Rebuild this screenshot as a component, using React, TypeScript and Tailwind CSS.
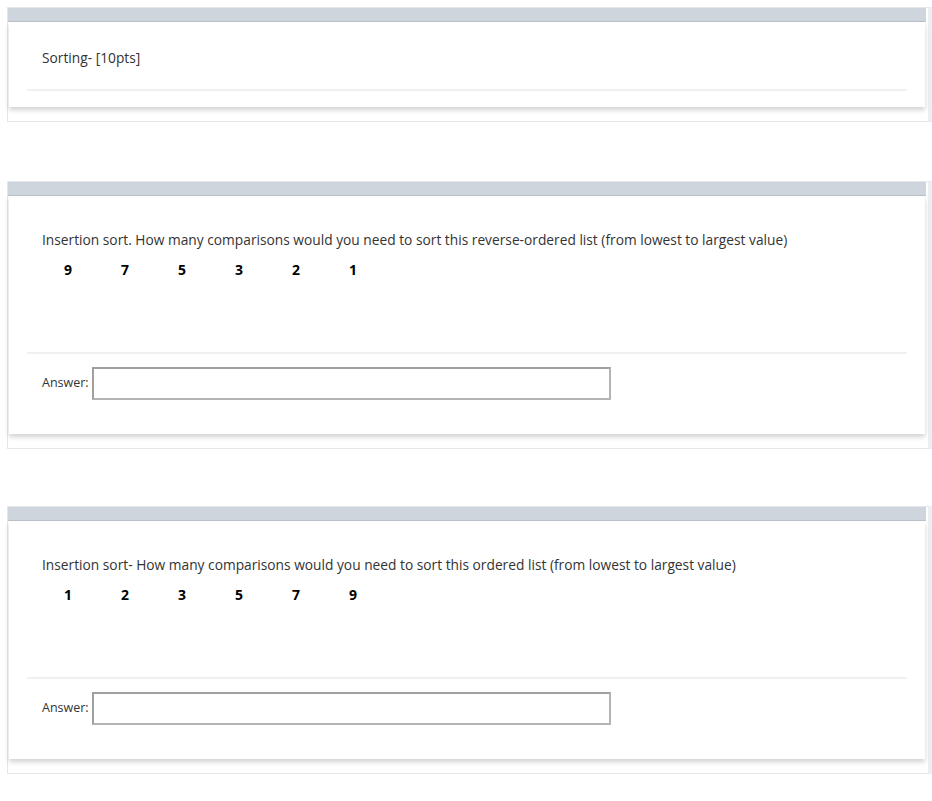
import React from "react";

const font = { fontFamily: '"Open Sans", "Noto Sans", sans-serif' };

function Frame({ children }: { children: React.ReactNode }) {
  return (
    <div className="ml-[7px] w-[925px] border-t border-l border-b border-[#e4e7eb] border-r-4 border-r-[#eceef1] bg-white">
      <div className="h-[14px] mr-[2px] bg-[#ced5dc] border-b border-[#bcc3ca]" />
      <div className="ml-px mr-[3px] bg-white shadow-[0_3px_5px_rgba(0,0,0,0.18)]">{children}</div>
      <div className="h-[14px]" />
    </div>
  );
}

function Numbers({ values }: { values: number[] }) {
  return (
    <div className="flex pl-[22px] h-[20px] items-center">
      {values.map((v, i) => (
        <div key={i} className="w-[57px] text-[14px] font-bold text-black">
          {v}
        </div>
      ))}
    </div>
  );
}

function Question({ text, values }: { text: string; values: number[] }) {
  return (
    <div className="px-[18px]">
      <div className="pt-[34px] px-[15px] text-[13.75px] leading-[20px] text-[#333]">{text}</div>
      <div className="mt-[9px] px-[15px]">
        <Numbers values={values} />
      </div>
      <div className="mt-[73px] h-[2px] bg-[#f0f0f0]" />
      <div className="flex items-center px-[15px] pt-[13px] pb-[34px]">
        <span className="text-[12.5px] text-[#333] mr-[3px]">Answer:</span>
        <div className="w-[519px] h-[33px] border-2 border-t-[#a0a0a0] border-l-[#a0a0a0] border-r-[#b4b4b4] border-b-[#b4b4b4]" />
      </div>
    </div>
  );
}

export default function App() {
  return (
    <div className="pt-[7px] pb-[20px] bg-white min-h-[801px]" style={font}>
      <Frame>
        <div className="px-[18px]">
          <div className="pt-[26px] px-[15px] text-[13.75px] leading-[20px] text-[#333]">Sorting- [10pts]</div>
          <div className="mt-[21px] h-[2px] bg-[#f0f0f0]" />
          <div className="h-[16px]" />
        </div>
      </Frame>
      <div className="h-[59px]" />
      <Frame>
        <Question
          text="Insertion sort. How many comparisons would you need to sort this reverse-ordered list (from lowest to largest value)"
          values={[9, 7, 5, 3, 2, 1]}
        />
      </Frame>
      <div className="h-[57px]" />
      <Frame>
        <Question
          text="Insertion sort- How many comparisons would you need to sort this ordered list (from lowest to largest value)"
          values={[1, 2, 3, 5, 7, 9]}
        />
      </Frame>
    </div>
  );
}
